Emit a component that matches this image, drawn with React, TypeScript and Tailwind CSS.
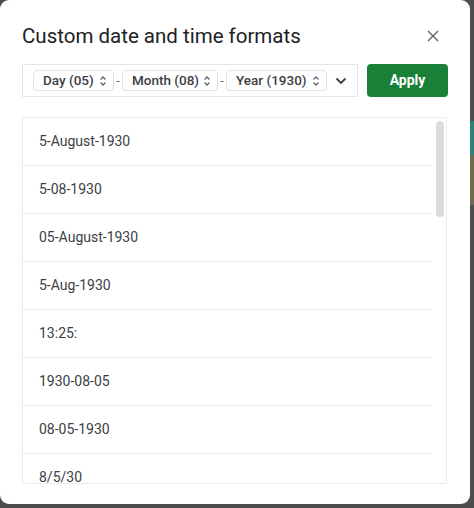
import React from "react";

const ROWS = [
  "5-August-1930",
  "5-08-1930",
  "05-August-1930",
  "5-Aug-1930",
  "13:25:",
  "1930-08-05",
  "08-05-1930",
  "8/5/30",
];

function UpDown() {
  return (
    <svg width="8" height="12" viewBox="0 0 8 12" fill="none" stroke="#5f6368" strokeWidth="1.3">
      <path d="M1.5 4.5 L4 2 L6.5 4.5" />
      <path d="M1.5 7.5 L4 10 L6.5 7.5" />
    </svg>
  );
}

function Chip({ label, w }: { label: string; w: string }) {
  return (
    <div
      className={`flex h-[21px] items-center justify-between rounded-[4px] border border-[#e3e3e3] pl-[9px] pr-[6px] text-[13.5px] font-medium text-[#3c4043] ${w}`}
    >
      <span>{label}</span>
      <UpDown />
    </div>
  );
}

export default function App() {
  return (
    <div
      className="relative h-[508px] w-[474px] overflow-hidden bg-[#4d4d4d]"
      style={{ fontFamily: "Roboto, 'Liberation Sans', sans-serif" }}
    >
      {/* sheet peeking out behind the dialog */}
      <div className="absolute right-0 top-[121px] h-[34px] w-[4px] bg-[#2f7f7a]" />
      <div className="absolute right-0 top-[155px] h-[50px] w-[4px] bg-[#6f6a4e]" />

      <div className="relative flex h-[504px] w-[470px] flex-col rounded-[9px] bg-white px-[22px]">
        <div className="flex items-center justify-between pt-[24px]">
          <h1 className="text-[20.5px] leading-[24px] text-[#202124]">Custom date and time formats</h1>
          <svg width="12" height="12" viewBox="0 0 12 12" className="mr-[9px]" stroke="#5f6368" strokeWidth="1.4">
            <path d="M1 1 L11 11 M11 1 L1 11" />
          </svg>
        </div>

        <div className="mt-[16px] flex gap-[9px]">
          <div className="flex h-[33px] w-[336px] items-center border border-[#e6e6e6] pl-[10px]">
            <Chip label="Day (05)" w="w-[81px]" />
            <span className="w-[8px] text-center text-[12px] text-[#5f6368]">-</span>
            <Chip label="Month (08)" w="w-[96px]" />
            <span className="w-[8px] text-center text-[12px] text-[#5f6368]">-</span>
            <Chip label="Year (1930)" w="w-[101px]" />
            <svg width="12" height="8" viewBox="0 0 12 8" className="ml-[8px]" fill="none" stroke="#3c4043" strokeWidth="1.8">
              <path d="M1.5 1.5 L6 6 L10.5 1.5" />
            </svg>
          </div>
          <button className="flex h-[33px] w-[81px] items-center justify-center rounded-[4px] bg-[#1a7f37] text-[14px] font-bold text-white">
            Apply
          </button>
        </div>

        <div className="relative mt-[20px] h-[367px] w-[425px] overflow-hidden border border-[#ececec]">
          {ROWS.map((r) => (
            <div key={r} className="mr-[14px] flex h-[48px] items-center border-b border-[#ebebeb] pl-[16px] text-[14px] text-[#3c4043]">
              {r}
            </div>
          ))}
          <div className="absolute right-[2px] top-[3px] h-[96px] w-[8px] rounded-full bg-[#dadce0]" />
        </div>
      </div>
    </div>
  );
}
